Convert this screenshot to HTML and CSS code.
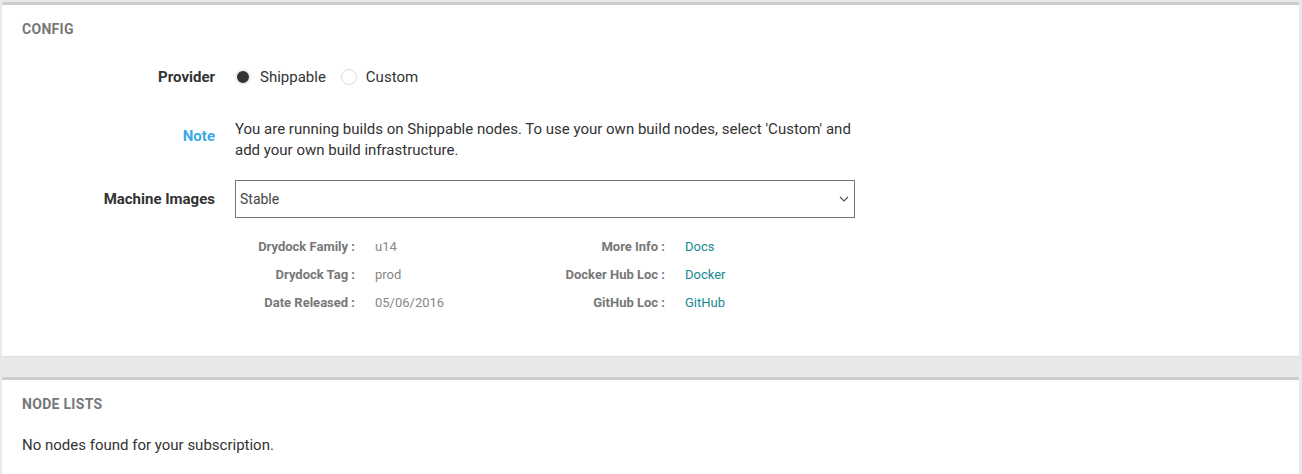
FILE: index.html
```html
<!DOCTYPE html>
<html lang="en">
<head>
  <meta charset="UTF-8">
  <meta name="viewport" content="width=device-width, initial-scale=1.0">
  <title>Node Pool Config</title>
  <link rel="stylesheet" href="styles.css">
</head>
<body>
  <!-- Config -->
  <section class="panel config">
    <h4 class="panel-title">Config</h4>

    <div class="form-row provider">
      <label class="form-label">Provider</label>
      <div class="form-control radios">
        <span class="radio checked"></span><span class="radio-text">Shippable</span>
        <span class="radio"></span><span class="radio-text">Custom</span>
      </div>
    </div>

    <div class="form-row note">
      <label class="form-label note-label">Note</label>
      <p class="form-control note-text">You are running builds on Shippable nodes. To use your own build nodes, select 'Custom' and add your own build infrastructure.</p>
    </div>

    <div class="form-row images">
      <label class="form-label">Machine Images</label>
      <div class="form-control">
        <div class="select">
          <span>Stable</span>
          <svg class="chevron" width="10" height="6" viewBox="0 0 10 6"><path d="M1 1l4 4 4-4" fill="none" stroke="#555" stroke-width="1.2"/></svg>
        </div>
      </div>
    </div>

    <div class="info-grid">
      <span class="info-label">Drydock Family :</span><span class="info-value">u14</span>
      <span class="info-label">More Info :</span><a class="info-link">Docs</a>
      <span class="info-label">Drydock Tag :</span><span class="info-value">prod</span>
      <span class="info-label">Docker Hub Loc :</span><a class="info-link">Docker</a>
      <span class="info-label">Date Released :</span><span class="info-value">05/06/2016</span>
      <span class="info-label">GitHub Loc :</span><a class="info-link">GitHub</a>
    </div>
  </section>

  <!-- Node lists -->
  <section class="panel nodes">
    <h4 class="panel-title">Node Lists</h4>
    <p class="empty">No nodes found for your subscription.</p>
  </section>
</body>
</html>
```

FILE: styles.css
```css
* {
  margin: 0;
  padding: 0;
  box-sizing: border-box;
}

body {
  background-color: #e8e8e8;
  font-family: Roboto, "Noto Sans", Arial, sans-serif;
  color: #333;
  font-size: 15px;
  padding: 2px 3px 0 2px;
}

/* Panels */
.panel {
  background: #fff;
  border-top: 3px solid #ccc;
  border-radius: 2px;
  padding: 0 20px;
}

.panel.config {
  height: 355px;
  border-bottom: 1px solid #ddd;
  margin-bottom: 20px;
}

.panel.nodes {
  height: 100px;
}

.panel-title {
  font-size: 14px;
  font-weight: bold;
  text-transform: uppercase;
  color: #777;
  letter-spacing: 0.3px;
  padding-top: 16px;
  height: 45px;
}

/* Form rows */
.form-row {
  display: grid;
  grid-template-columns: 193px 620px;
  column-gap: 20px;
  align-items: center;
}

.form-label {
  text-align: right;
  font-weight: bold;
  color: #333;
}

.provider {
  margin-top: 6px;
  height: 42px;
}

.radios {
  display: flex;
  align-items: center;
}

.radio {
  width: 16px;
  height: 16px;
  border-radius: 50%;
  border: 1px solid #ddd;
  background: #fff;
  margin-right: 9px;
}

.radio.checked {
  background: #333;
  border: 2px solid #eee;
}

.radio-text {
  margin-right: 15px;
}

.note {
  margin-top: 21px;
  align-items: start;
}

.note-label {
  color: #3ba9e8;
  line-height: 18px;
  padding-top: 8px;
}

.note-text {
  line-height: 21px;
}

.images {
  margin-top: 19px;
}

.select {
  height: 38px;
  border: 1px solid #777;
  display: flex;
  align-items: center;
  justify-content: space-between;
  padding: 0 5px 0 4px;
  font-size: 14px;
  color: #444;
}

/* Image info */
.info-grid {
  display: grid;
  grid-template-columns: 120px 150px 120px auto;
  column-gap: 20px;
  row-gap: 10px;
  margin: 20px 0 0 213px;
  font-size: 13px;
  line-height: 18px;
}

.info-label {
  text-align: right;
  font-weight: bold;
  color: #777;
}

.info-value {
  color: #888;
}

.info-link {
  color: #15888f;
}

/* Node lists */
.empty {
  margin-top: 11px;
}
```
